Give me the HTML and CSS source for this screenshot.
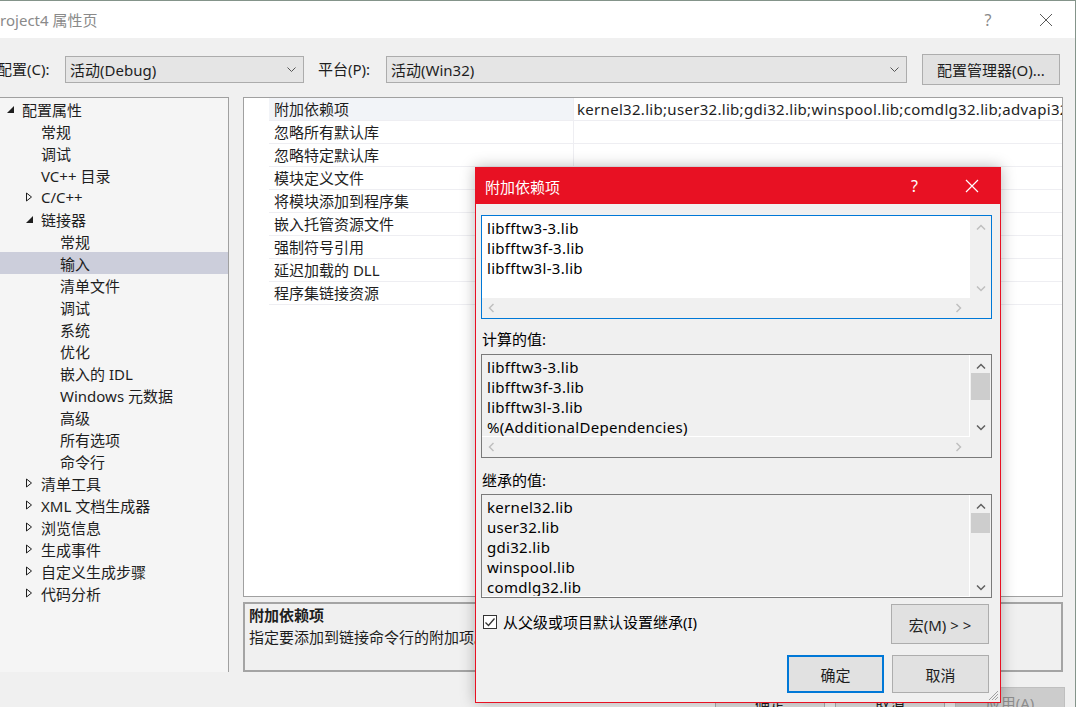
FILE: index.html
```html
<!DOCTYPE html>
<html lang="zh-CN">
<head>
  <meta charset="UTF-8">
  <title>Project4 属性页</title>
  <link rel="stylesheet" href="styles.css">
</head>
<body>
  <div class="window">
    <div class="titlebar">
      <span class="title">Project4 属性页</span>
      <span class="cap-btn cap-help">?</span>
      <span class="cap-btn cap-close">
        <svg width="14" height="14" viewBox="0 0 14 14"><path d="M1 1L13 13M13 1L1 13" stroke="#5a5a5a" stroke-width="1"/></svg>
      </span>
    </div>

    <div class="config-row">
      <span class="cfg-label">配置(C):</span>
      <div class="combo combo-config">
        <span>活动(Debug)</span>
        <svg class="chev" width="9" height="5" viewBox="0 0 9 5"><path d="M0.5 0.5L4.5 4.5L8.5 0.5" fill="none" stroke="#555"/></svg>
      </div>
      <span class="cfg-label plat-label">平台(P):</span>
      <div class="combo combo-platform">
        <span>活动(Win32)</span>
        <svg class="chev" width="9" height="5" viewBox="0 0 9 5"><path d="M0.5 0.5L4.5 4.5L8.5 0.5" fill="none" stroke="#555"/></svg>
      </div>
      <button class="btn btn-manager">配置管理器(O)...</button>
    </div>

    <div class="main">
      <div class="tree">
        <div class="node lv0"><svg class="tw" viewBox="0 0 16 16"><path d="M12 5v7H5z" fill="#1e1e1e"/></svg><span>配置属性</span></div>
        <div class="node lv1"><i class="tw"></i><span>常规</span></div>
        <div class="node lv1"><i class="tw"></i><span>调试</span></div>
        <div class="node lv1"><i class="tw"></i><span>VC++ 目录</span></div>
        <div class="node lv1"><svg class="tw" viewBox="0 0 16 16"><path d="M5.5 4l5 4-5 4z" fill="none" stroke="#1e1e1e"/></svg><span>C/C++</span></div>
        <div class="node lv1"><svg class="tw" viewBox="0 0 16 16"><path d="M12 5v7H5z" fill="#1e1e1e"/></svg><span>链接器</span></div>
        <div class="node lv2"><i class="tw"></i><span>常规</span></div>
        <div class="node lv2 selected"><i class="tw"></i><span>输入</span></div>
        <div class="node lv2"><i class="tw"></i><span>清单文件</span></div>
        <div class="node lv2"><i class="tw"></i><span>调试</span></div>
        <div class="node lv2"><i class="tw"></i><span>系统</span></div>
        <div class="node lv2"><i class="tw"></i><span>优化</span></div>
        <div class="node lv2"><i class="tw"></i><span>嵌入的 IDL</span></div>
        <div class="node lv2"><i class="tw"></i><span>Windows 元数据</span></div>
        <div class="node lv2"><i class="tw"></i><span>高级</span></div>
        <div class="node lv2"><i class="tw"></i><span>所有选项</span></div>
        <div class="node lv2"><i class="tw"></i><span>命令行</span></div>
        <div class="node lv1"><svg class="tw" viewBox="0 0 16 16"><path d="M5.5 4l5 4-5 4z" fill="none" stroke="#1e1e1e"/></svg><span>清单工具</span></div>
        <div class="node lv1"><svg class="tw" viewBox="0 0 16 16"><path d="M5.5 4l5 4-5 4z" fill="none" stroke="#1e1e1e"/></svg><span>XML 文档生成器</span></div>
        <div class="node lv1"><svg class="tw" viewBox="0 0 16 16"><path d="M5.5 4l5 4-5 4z" fill="none" stroke="#1e1e1e"/></svg><span>浏览信息</span></div>
        <div class="node lv1"><svg class="tw" viewBox="0 0 16 16"><path d="M5.5 4l5 4-5 4z" fill="none" stroke="#1e1e1e"/></svg><span>生成事件</span></div>
        <div class="node lv1"><svg class="tw" viewBox="0 0 16 16"><path d="M5.5 4l5 4-5 4z" fill="none" stroke="#1e1e1e"/></svg><span>自定义生成步骤</span></div>
        <div class="node lv1"><svg class="tw" viewBox="0 0 16 16"><path d="M5.5 4l5 4-5 4z" fill="none" stroke="#1e1e1e"/></svg><span>代码分析</span></div>
      </div>

      <div class="right">
        <div class="props">
          <div class="prop current"><div class="pname">附加依赖项</div><div class="pval">kernel32.lib;user32.lib;gdi32.lib;winspool.lib;comdlg32.lib;advapi32.lib;shell32.lib;ole32.lib</div></div>
          <div class="prop"><div class="pname">忽略所有默认库</div><div class="pval"></div></div>
          <div class="prop"><div class="pname">忽略特定默认库</div><div class="pval"></div></div>
          <div class="prop"><div class="pname">模块定义文件</div><div class="pval"></div></div>
          <div class="prop"><div class="pname">将模块添加到程序集</div><div class="pval"></div></div>
          <div class="prop"><div class="pname">嵌入托管资源文件</div><div class="pval"></div></div>
          <div class="prop"><div class="pname">强制符号引用</div><div class="pval"></div></div>
          <div class="prop"><div class="pname">延迟加载的 DLL</div><div class="pval"></div></div>
          <div class="prop"><div class="pname">程序集链接资源</div><div class="pval"></div></div>
        </div>
        <div class="desc">
          <div class="desc-title">附加依赖项</div>
          <div>指定要添加到链接命令行的附加项。[例如 kernel32.lib]</div>
        </div>
      </div>
    </div>

    <div class="footer">
      <button class="btn foot-btn">确定</button>
      <button class="btn foot-btn">取消</button>
      <button class="btn foot-btn disabled">应用(A)</button>
    </div>
  </div>

  <!-- 附加依赖项 编辑对话框 -->
  <div class="dialog">
    <div class="dlg-title">
      <span class="dlg-name">附加依赖项</span>
      <span class="dlg-cap">?</span>
      <span class="dlg-cap">
        <svg width="14" height="14" viewBox="0 0 14 14"><path d="M1 1L13 13M13 1L1 13" stroke="#fff" stroke-width="1.2"/></svg>
      </span>
    </div>
    <div class="dlg-body">
      <div class="listbox edit focused with-h">
        <div class="lb-text">
          <div>libfftw3-3.lib</div>
          <div>libfftw3f-3.lib</div>
          <div>libfftw3l-3.lib</div>
        </div>
        <div class="vbar">
          <svg class="arr off" viewBox="0 0 10 6"><path d="M1 5.5L5 1.5L9 5.5" fill="none" stroke-width="1.5"/></svg>
          <div class="track"></div>
          <svg class="arr off" viewBox="0 0 10 6"><path d="M1 0.5L5 4.5L9 0.5" fill="none" stroke-width="1.5"/></svg>
        </div>
        <div class="hbar">
          <svg class="harr off" viewBox="0 0 6 10"><path d="M5.5 1L1.5 5L5.5 9" fill="none" stroke-width="1.5"/></svg>
          <svg class="harr off" viewBox="0 0 6 10"><path d="M0.5 1L4.5 5L0.5 9" fill="none" stroke-width="1.5"/></svg>
        </div>
        <div class="corner"></div>
      </div>

      <div class="field-label lbl-calc">计算的值:</div>
      <div class="listbox readonly with-h">
        <div class="lb-text">
          <div>libfftw3-3.lib</div>
          <div>libfftw3f-3.lib</div>
          <div>libfftw3l-3.lib</div>
          <div>%(AdditionalDependencies)</div>
        </div>
        <div class="vbar">
          <svg class="arr" viewBox="0 0 10 6"><path d="M1 5.5L5 1.5L9 5.5" fill="none" stroke-width="1.5"/></svg>
          <div class="track"><div class="thumb thumb-calc"></div></div>
          <svg class="arr" viewBox="0 0 10 6"><path d="M1 0.5L5 4.5L9 0.5" fill="none" stroke-width="1.5"/></svg>
        </div>
        <div class="hbar">
          <svg class="harr off" viewBox="0 0 6 10"><path d="M5.5 1L1.5 5L5.5 9" fill="none" stroke-width="1.5"/></svg>
          <svg class="harr off" viewBox="0 0 6 10"><path d="M0.5 1L4.5 5L0.5 9" fill="none" stroke-width="1.5"/></svg>
        </div>
        <div class="corner"></div>
      </div>

      <div class="field-label lbl-inh">继承的值:</div>
      <div class="listbox readonly">
        <div class="lb-text">
          <div>kernel32.lib</div>
          <div>user32.lib</div>
          <div>gdi32.lib</div>
          <div>winspool.lib</div>
          <div>comdlg32.lib</div>
          <div>advapi32.lib</div>
        </div>
        <div class="vbar">
          <svg class="arr" viewBox="0 0 10 6"><path d="M1 5.5L5 1.5L9 5.5" fill="none" stroke-width="1.5"/></svg>
          <div class="track"><div class="thumb thumb-inh"></div></div>
          <svg class="arr" viewBox="0 0 10 6"><path d="M1 0.5L5 4.5L9 0.5" fill="none" stroke-width="1.5"/></svg>
        </div>
      </div>

      <div class="opt-row">
        <label class="check">
          <span class="box">
            <svg width="12" height="12" viewBox="0 0 12 12"><path d="M1.5 6.5L4.5 9.5L10.5 2.5" fill="none" stroke="#333" stroke-width="1.3"/></svg>
          </span>
          <span>从父级或项目默认设置继承(I)</span>
        </label>
        <button class="btn btn-macro">宏(M) &gt; &gt;</button>
      </div>

      <div class="dlg-actions">
        <button class="btn dlg-btn default">确定</button>
        <button class="btn dlg-btn">取消</button>
      </div>
    </div>
    <svg class="grip" width="11" height="11" viewBox="0 0 11 11">
      <path d="M10 1L1 10M10 4L4 10M10 7L7 10" stroke="#a0a0a0" stroke-width="1"/>
    </svg>
  </div>
</body>
</html>
```

FILE: styles.css
```css
* {
  box-sizing: border-box;
}

body {
  margin: 0;
  width: 1076px;
  height: 707px;
  overflow: hidden;
  position: relative;
  background: #f0f0f0;
  font-family: "Noto Sans", "Noto Sans CJK SC", sans-serif;
  font-size: 15px;
  color: #1e1e1e;
}

button {
  font: inherit;
  color: inherit;
}

.window {
  height: 707px;
  border-top: 1px solid #84948a;
  border-right: 1px solid #84948a;
}

/* title bar */
.titlebar {
  height: 37px;
  background: #fff;
  display: flex;
  align-items: center;
}

.title {
  margin-left: -9px;
  color: #8a8a8a;
  flex: 1;
}

.cap-btn {
  width: 58px;
  height: 37px;
  display: flex;
  align-items: center;
  justify-content: center;
}

.cap-help {
  color: #8a8a8a;
  font-size: 16px;
}

/* configuration row */
.config-row {
  height: 59px;
  padding-top: 18px;
  display: flex;
  align-items: flex-start;
}

.cfg-label {
  width: 68px;
  margin-left: -3px;
  line-height: 27px;
}

.plat-label {
  margin-left: 14px;
}

.combo {
  height: 27px;
  background: #e5e5e5;
  border: 1px solid #acacac;
  display: flex;
  align-items: center;
  justify-content: space-between;
  padding: 0 7px 0 4px;
}

.combo-config {
  width: 239px;
}

.combo-platform {
  width: 521px;
}

.btn {
  background: #e1e1e1;
  border: 1px solid #adadad;
  padding: 0;
}

.btn-manager {
  width: 138px;
  height: 31px;
  margin: -2px 0 0 15px;
}

/* main area */
.main {
  display: flex;
  height: 575px;
}

.tree {
  width: 230px;
  margin-left: -1px;
  border: 1px solid #a0a0a0;
  border-bottom: none;
  background: #f5f5f5;
}

.node {
  height: 22px;
  display: flex;
  align-items: center;
  padding-left: 2px;
}

.node.lv1 {
  padding-left: 21px;
}

.node.lv2 {
  padding-left: 40px;
}

.node.selected {
  background: #cccedb;
}

.tw {
  width: 16px;
  height: 16px;
  margin-right: 4px;
  flex: none;
}

.right {
  width: 820px;
  margin-left: 14px;
  display: flex;
  flex-direction: column;
  gap: 5px;
}

.props {
  height: 502px;
  background: #fff;
  border: 1px solid #a0a0a0;
  padding-left: 25px;
}

.prop {
  display: flex;
  height: 23px;
  border-bottom: 1px solid #eeeef2;
}

.pname {
  width: 305px;
  padding-left: 5px;
  line-height: 22px;
  border-right: 1px solid #eeeef2;
  flex: none;
}

.prop.current .pname {
  background: #f2f4f8;
}

.pval {
  flex: 1;
  padding-left: 3px;
  line-height: 22px;
  letter-spacing: 0.3px;
  white-space: nowrap;
  overflow: hidden;
}

.desc {
  height: 70px;
  border: 2px solid #a4a4a4;
  padding: 0 4px;
  line-height: 22px;
}

.desc-title {
  font-weight: bold;
}

/* footer buttons (mostly hidden by the dialog) */
.footer {
  display: flex;
  justify-content: flex-end;
  gap: 10px;
  margin-top: 15px;
  padding-right: 10px;
}

.foot-btn {
  width: 110px;
  height: 30px;
}

.foot-btn.disabled {
  background: #cccccc;
  border-color: #bfbfbf;
  color: #8d8d8d;
}

/* edit dialog */
.dialog {
  position: absolute;
  left: 475px;
  top: 167px;
  width: 526px;
  height: 536px;
  background: #f0f0f0;
  border: 1px solid #e81123;
  box-shadow: 0 0 14px rgba(0, 0, 0, 0.28);
}

.dlg-title {
  height: 36px;
  background: #e81123;
  color: #fff;
  display: flex;
  align-items: center;
}

.dlg-name {
  flex: 1;
  padding-left: 9px;
}

.dlg-cap {
  width: 57px;
  height: 36px;
  display: flex;
  align-items: center;
  justify-content: center;
  font-size: 16px;
}

.dlg-body {
  padding: 11px 8px 0 5px;
}

.listbox {
  height: 104px;
  border: 1px solid #7a7a7a;
  display: grid;
  grid-template-columns: 1fr 21px;
  grid-template-rows: 1fr;
}

.listbox.with-h {
  grid-template-rows: 1fr 20px;
}

.listbox.focused {
  border-color: #0078d7;
}

.lb-text {
  overflow: hidden;
  padding: 2px 5px 0;
  line-height: 20px;
  letter-spacing: 0.3px;
  color: #000;
  white-space: nowrap;
}

.edit .lb-text {
  background: #fff;
}

.readonly .lb-text {
  border-right: 1px solid #fff;
  border-bottom: 1px solid #fff;
}

.vbar {
  display: flex;
  flex-direction: column;
  align-items: center;
  padding: 8px 0 6px;
}

.track {
  flex: 1;
  width: 100%;
  margin: 4px 0;
}

.thumb {
  background: #cdcdcd;
  margin: 0 1px;
}

.thumb-calc {
  height: 27px;
}

.thumb-inh {
  height: 20px;
}

.arr {
  width: 10px;
  height: 6px;
  stroke: #606060;
}

.hbar {
  display: flex;
  align-items: center;
  justify-content: space-between;
  padding: 0 8px 0 6px;
}

.harr {
  width: 6px;
  height: 10px;
}

.arr.off,
.harr.off {
  stroke: #bfbfbf;
}

.field-label {
  line-height: 20px;
  color: #000;
}

.lbl-calc {
  margin: 10px 0 5px 1px;
}

.lbl-inh {
  margin: 12px 0 4px 1px;
}

.opt-row {
  display: flex;
  justify-content: space-between;
  align-items: flex-start;
  margin-top: 6px;
  padding-right: 3px;
}

.check {
  display: flex;
  align-items: center;
  gap: 6px;
  margin: 7px 0 0 2px;
  color: #000;
}

.box {
  width: 14px;
  height: 14px;
  border: 1px solid #333;
  background: #fff;
  display: flex;
  align-items: center;
  justify-content: center;
}

.btn-macro {
  width: 98px;
  height: 40px;
  background: #e1e1e1;
}

.dlg-actions {
  display: flex;
  justify-content: flex-end;
  gap: 8px;
  margin-top: 11px;
  padding-right: 3px;
}

.dlg-btn {
  width: 97px;
  height: 38px;
}

.dlg-btn.default {
  border: 2px solid #0078d7;
}

.grip {
  position: absolute;
  right: 1px;
  bottom: 1px;
}
```
